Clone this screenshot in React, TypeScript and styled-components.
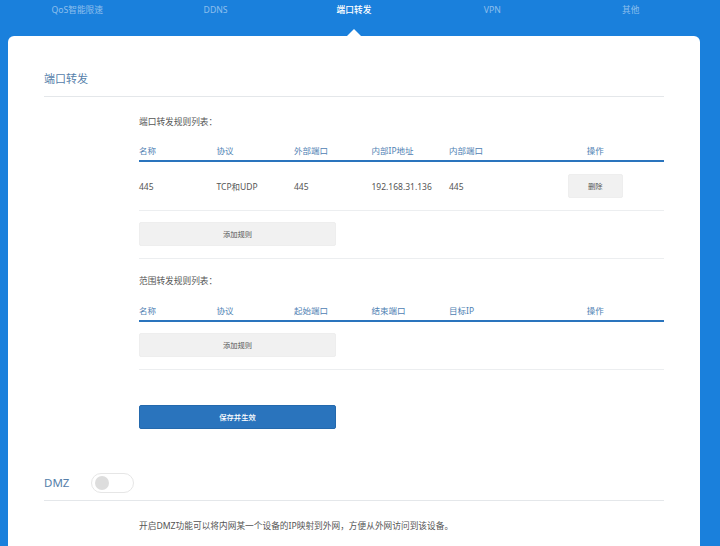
import styled, { createGlobalStyle } from 'styled-components';

const GlobalStyle = createGlobalStyle`
  html, body {
    margin: 0;
    padding: 0;
    height: 546px;
    overflow: hidden;
    background: #1a80dc;
    font-family: "Noto Sans", "Noto Sans CJK SC", sans-serif;
  }
  * {
    box-sizing: border-box;
  }
`;

const Page = styled.div`
  width: 720px;
  height: 546px;
  overflow: hidden;
  padding: 0 20px 0 8px;
`;

const Tabs = styled.nav`
  display: grid;
  grid-template-columns: repeat(5, 1fr);
  height: 36px;
`;

const Tab = styled.div<{ $active?: boolean }>`
  position: relative;
  text-align: center;
  font-size: 8.7px;
  line-height: 20px;
  color: ${(p) => (p.$active ? '#ffffff' : 'rgba(255, 255, 255, 0.5)')};
  font-weight: ${(p) => (p.$active ? 500 : 400)};

  ${(p) =>
    p.$active &&
    `&::after {
      content: '';
      position: absolute;
      left: 50%;
      bottom: 0;
      margin-left: -7px;
      border-left: 7px solid transparent;
      border-right: 7px solid transparent;
      border-bottom: 7px solid #ffffff;
    }`}
`;

const Card = styled.main`
  background: #ffffff;
  border-radius: 6px 6px 0 0;
  height: 600px;
  padding: 0 36px;
`;

const SectionHead = styled.header<{ $height: number; $top: number }>`
  display: flex;
  align-items: center;
  gap: 22px;
  height: ${(p) => p.$height}px;
  padding-top: ${(p) => p.$top}px;
  border-bottom: 1px solid #e4e7ea;
`;

const SectionTitle = styled.h2<{ $size: number }>`
  margin: 0;
  font-size: ${(p) => p.$size}px;
  font-weight: 400;
  color: #5580aa;
`;

const Content = styled.section`
  padding-left: 95px;
`;

const ListTitle = styled.div<{ $top: number }>`
  padding-top: ${(p) => p.$top}px;
  font-size: 8.7px;
  line-height: 14px;
  color: #555555;
`;

const Row = styled.div<{ $height: number }>`
  display: grid;
  grid-template-columns: repeat(5, 77.5px) 1fr;
  align-items: center;
  height: ${(p) => p.$height}px;
`;

const HeadRow = styled(Row)`
  margin-top: 8px;
  padding-top: 3px;
  border-bottom: 2px solid #2a74bd;
  font-size: 8.5px;
  color: #4f81b3;
`;

const BodyRow = styled(Row)`
  border-bottom: 1px solid #eceef0;
  font-size: 8.5px;
  color: #555555;
`;

const ActionCell = styled.div`
  display: flex;
  justify-content: center;
`;

const FlatButton = styled.button<{ $width: number }>`
  display: block;
  width: ${(p) => p.$width}px;
  height: 24px;
  padding: 0;
  border: 1px solid #eeeeee;
  border-radius: 2px;
  background: #f1f1f1;
  font: inherit;
  font-size: 7.3px;
  color: #555555;
`;

const AddBlock = styled.div`
  height: 48px;
  padding-top: 11px;
  border-bottom: 1px solid #eceef0;
`;

const SaveButton = styled.button`
  display: block;
  width: 197px;
  height: 24px;
  margin-top: 35px;
  padding: 0;
  border: 1px solid #2469ad;
  border-radius: 2px;
  background: #2a74bd;
  font: inherit;
  font-size: 7.3px;
  font-weight: 500;
  color: #ffffff;
`;

const DmzBlock = styled.section`
  margin-top: 33px;
`;

const Toggle = styled.div`
  display: flex;
  align-items: center;
  width: 43px;
  height: 20px;
  padding-left: 3px;
  border: 1px solid #e6e6e6;
  border-radius: 10px;
  background: #ffffff;
`;

const ToggleKnob = styled.span`
  width: 14px;
  height: 14px;
  border-radius: 50%;
  background: #dddddd;
`;

const Note = styled.p`
  margin: 0;
  padding: 18px 0 0 95px;
  font-size: 8.7px;
  line-height: 14px;
  color: #555555;
`;

const portColumns = ['名称', '协议', '外部端口', '内部IP地址', '内部端口'];
const rangeColumns = ['名称', '协议', '起始端口', '结束端口', '目标IP'];
const portRow = ['445', 'TCP和UDP', '445', '192.168.31.136', '445'];
const tabs = ['QoS智能限速', 'DDNS', '端口转发', 'VPN', '其他'];

const TableHead = ({ columns, height }: { columns: string[]; height: number }) => (
  <HeadRow $height={height}>
    {columns.map((c) => (
      <div key={c}>{c}</div>
    ))}
    <ActionCell>操作</ActionCell>
  </HeadRow>
);

export default function App() {
  return (
    <Page>
      <GlobalStyle />
      <Tabs>
        {tabs.map((t) => (
          <Tab key={t} $active={t === '端口转发'}>
            {t}
          </Tab>
        ))}
      </Tabs>
      <Card>
        <SectionHead $height={61} $top={24}>
          <SectionTitle $size={11}>端口转发</SectionTitle>
        </SectionHead>
        <Content>
          <ListTitle $top={18}>端口转发规则列表：</ListTitle>
          <TableHead columns={portColumns} height={25} />
          <BodyRow $height={49}>
            {portRow.map((v, i) => (
              <div key={i}>{v}</div>
            ))}
            <ActionCell>
              <FlatButton $width={55}>删除</FlatButton>
            </ActionCell>
          </BodyRow>
          <AddBlock>
            <FlatButton $width={197}>添加规则</FlatButton>
          </AddBlock>
          <ListTitle $top={15}>范围转发规则列表：</ListTitle>
          <TableHead columns={rangeColumns} height={26} />
          <AddBlock>
            <FlatButton $width={197}>添加规则</FlatButton>
          </AddBlock>
          <SaveButton>保存并生效</SaveButton>
        </Content>
        <DmzBlock>
          <SectionHead $height={39} $top={3}>
            <SectionTitle $size={11.5}>DMZ</SectionTitle>
            <Toggle>
              <ToggleKnob />
            </Toggle>
          </SectionHead>
          <Note>开启DMZ功能可以将内网某一个设备的IP映射到外网，方便从外网访问到该设备。</Note>
        </DmzBlock>
      </Card>
    </Page>
  );
}
